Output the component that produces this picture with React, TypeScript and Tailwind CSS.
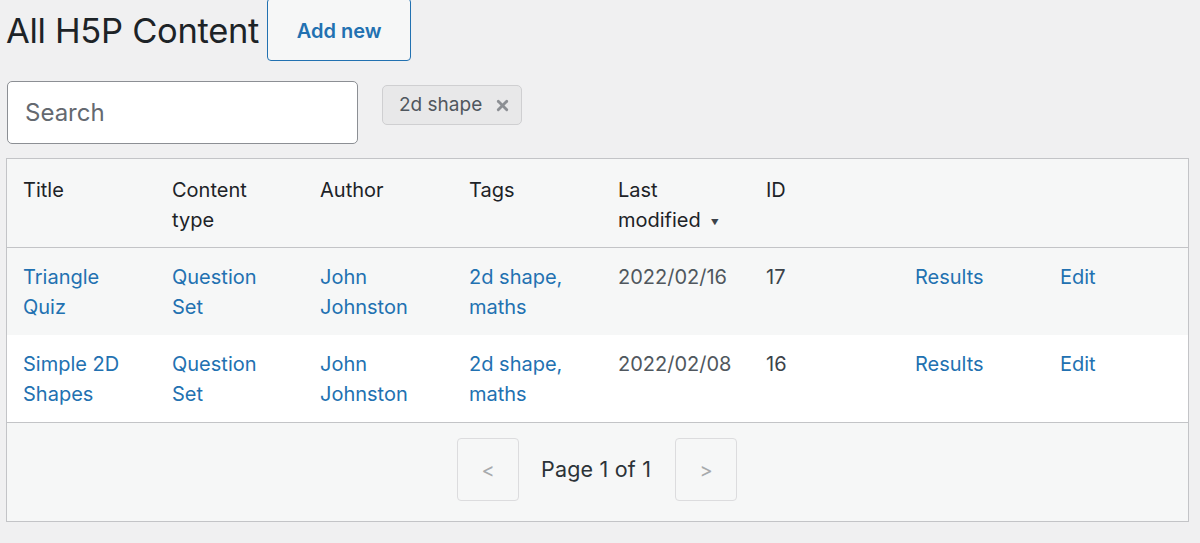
import { X } from 'lucide-react';

type Row = {
  title: string[];
  type: string[];
  author: string[];
  tags: string[];
  modified: string;
  id: number;
  striped: boolean;
};

const rows: Row[] = [
  {
    title: ['Triangle', 'Quiz'],
    type: ['Question', 'Set'],
    author: ['John', 'Johnston'],
    tags: ['2d shape,', 'maths'],
    modified: '2022/02/16',
    id: 17,
    striped: true,
  },
  {
    title: ['Simple 2D', 'Shapes'],
    type: ['Question', 'Set'],
    author: ['John', 'Johnston'],
    tags: ['2d shape,', 'maths'],
    modified: '2022/02/08',
    id: 16,
    striped: false,
  },
];

const Lines = ({ lines }: { lines: string[] }) => (
  <>
    {lines.map((l) => (
      <span key={l} className="block">
        {l}
      </span>
    ))}
  </>
);

const cell = 'px-[16px] pt-[14px] pb-[13px] align-top';
const head = 'px-[16px] pt-[16px] pb-[12px] text-left align-top font-normal';

export default function App() {
  return (
    <div
      className="min-h-[543px] bg-[#f0f0f1] text-[#3c434a]"
      style={{ fontFamily: 'Inter, "Liberation Sans", sans-serif' }}
    >
      <div className="flex items-start gap-[8px] pl-[6px]">
        <h1 className="pt-[9px] text-[34.5px] leading-[44px] tracking-[-0.3px] text-[#1d2327]">
          All H5P Content
        </h1>
        <button className="-mt-[2px] h-[63px] w-[144px] rounded-[4px] border border-[#2271b1] bg-[#f6f7f7] pt-[3px] text-[20px] font-semibold text-[#2271b1]">
          Add new
        </button>
      </div>

      <div className="mt-[20px] flex items-start pl-[7px]">
        <div className="flex h-[63px] w-[351px] items-center rounded-[5px] border border-[#8c8f94] bg-white pl-[17px] text-[24px] text-[#646970]">
          Search
        </div>
        <div className="mt-[4px] ml-[24px] flex h-[40px] items-center gap-[12px] rounded-[5px] border border-[#cfcfd1] bg-[#e8e8e9] pr-[10px] pl-[16px] text-[19px] text-[#50575e]">
          <span>2d shape</span>
          <X size={17} strokeWidth={4} className="text-[#8c8f94]" />
        </div>
      </div>

      <div className="mt-[14px] mr-[11px] ml-[6px] border border-[#c3c4c7] bg-white">
        <table className="w-full table-fixed border-collapse text-[20px] leading-[30px]">
          <colgroup>
            <col className="w-[149px]" />
            <col className="w-[148px]" />
            <col className="w-[149px]" />
            <col className="w-[149px]" />
            <col className="w-[148px]" />
            <col className="w-[149px]" />
            <col className="w-[145px]" />
            <col />
          </colgroup>
          <thead>
            <tr className="border-b border-[#c3c4c7] bg-[#f6f7f7] text-[#1d2327]">
              <th className={head}>Title</th>
              <th className={head}>
                <Lines lines={['Content', 'type']} />
              </th>
              <th className={head}>Author</th>
              <th className={head}>Tags</th>
              <th className={head}>
                <span className="block">Last</span>
                <span className="flex items-center gap-[10px]">
                  modified
                  <span className="pt-[3px] text-[8px] leading-none text-[#3c434a]">▼</span>
                </span>
              </th>
              <th className={head}>ID</th>
              <th />
              <th />
            </tr>
          </thead>
          <tbody>
            {rows.map((r) => (
              <tr key={r.id} className={r.striped ? 'bg-[#f6f7f7]' : 'bg-white'}>
                <td className={`${cell} text-[#2271b1]`}>
                  <Lines lines={r.title} />
                </td>
                <td className={`${cell} text-[#2271b1]`}>
                  <Lines lines={r.type} />
                </td>
                <td className={`${cell} text-[#2271b1]`}>
                  <Lines lines={r.author} />
                </td>
                <td className={`${cell} text-[#2271b1]`}>
                  <Lines lines={r.tags} />
                </td>
                <td className={`${cell} text-[#50575e]`}>{r.modified}</td>
                <td className={cell}>{r.id}</td>
                <td className={`${cell} text-[#2271b1]`}>Results</td>
                <td className={`${cell} text-[#2271b1]`}>Edit</td>
              </tr>
            ))}
          </tbody>
        </table>
        <div className="flex items-center gap-[22px] border-t border-[#c3c4c7] bg-[#f6f7f7] pt-[15px] pb-[20px] pl-[450px]">
          <button className="flex h-[63px] w-[62px] items-center justify-center rounded-[4px] border border-[#dcdcde] bg-[#f6f7f7] text-[20px] text-[#a7aaad]">
            &lt;
          </button>
          <span className="w-[112px] text-[21.5px] tracking-[0.2px] text-[#2c3338]">Page 1 of 1</span>
          <button className="flex h-[63px] w-[62px] items-center justify-center rounded-[4px] border border-[#dcdcde] bg-[#f6f7f7] text-[20px] text-[#a7aaad]">
            &gt;
          </button>
        </div>
      </div>
    </div>
  );
}
